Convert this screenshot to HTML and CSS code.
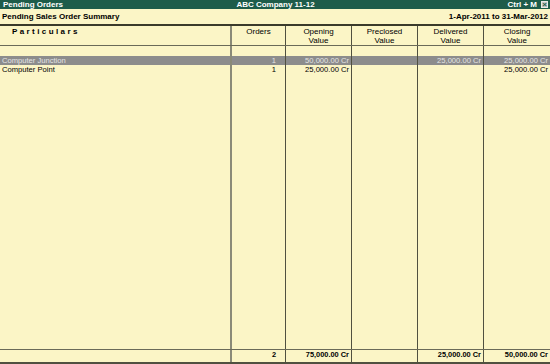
FILE: index.html
```html
<!DOCTYPE html>
<html>
<head>
<meta charset="utf-8">
<link rel="stylesheet" href="styles.css">
</head>
<body>
<div class="screen">
  <div class="titlebar">
    <span class="t-left">Pending Orders</span>
    <span class="t-center">ABC Company 11-12</span>
    <span class="t-right">Ctrl + M <span class="closebox">&#215;</span></span>
  </div>
  <div class="subhead">
    <span>Pending Sales Order Summary</span>
    <span>1-Apr-2011 to 31-Mar-2012</span>
  </div>
  <div class="grid head">
    <div class="c c1 part">Particulars</div>
    <div class="c c2 ctr">Orders</div>
    <div class="c c3 ctr">Opening<br>Value</div>
    <div class="c c4 ctr">Preclosed<br>Value</div>
    <div class="c c5 ctr">Delivered<br>Value</div>
    <div class="c c6 ctr">Closing<br>Value</div>
  </div>
  <div class="grid body">
    <div class="c c1"></div><div class="c c2"></div><div class="c c3"></div><div class="c c4"></div><div class="c c5"></div><div class="c c6"></div>

    <div class="c c1 sel name">Computer Junction</div>
    <div class="c c2 sel num ord">1</div>
    <div class="c c3 sel num">50,000.00 Cr</div>
    <div class="c c4 sel num"></div>
    <div class="c c5 sel num">25,000.00 Cr</div>
    <div class="c c6 sel num">25,000.00 Cr</div>

    <div class="c c1 name">Computer Point</div>
    <div class="c c2 num ord">1</div>
    <div class="c c3 num">25,000.00 Cr</div>
    <div class="c c4 num"></div>
    <div class="c c5 num"></div>
    <div class="c c6 num">25,000.00 Cr</div>

    <div class="c c1"></div><div class="c c2"></div><div class="c c3"></div><div class="c c4"></div><div class="c c5"></div><div class="c c6"></div>
  </div>
  <div class="grid total">
    <div class="c c1"></div>
    <div class="c c2 num ord">2</div>
    <div class="c c3 num">75,000.00 Cr</div>
    <div class="c c4 num"></div>
    <div class="c c5 num">25,000.00 Cr</div>
    <div class="c c6 num">50,000.00 Cr</div>
  </div>
</div>
</body>
</html>
```
FILE: styles.css
```css
html, body {
  margin: 0;
  padding: 0;
  background: #fbf5c6;
}
.screen {
  width: 550px;
  height: 364px;
  display: flex;
  flex-direction: column;
  font-family: "Liberation Sans", Arial, sans-serif;
  font-size: 8px;
  color: #000;
  background: #fbf5c6;
  overflow: hidden;
}
.titlebar {
  height: 9px;
  background: #1e5c4a;
  color: #fff;
  font-weight: bold;
  font-size: 8px;
  line-height: 9px;
  display: grid;
  grid-template-columns: 1fr auto 1fr;
  padding: 0 2px 0 3px;
  flex: none;
}
.t-center { text-align: center; }
.t-right {
  text-align: right;
  display: flex;
  justify-content: flex-end;
  align-items: center;
  gap: 4px;
}
.closebox {
  display: inline-block;
  width: 7px;
  height: 7px;
  line-height: 6px;
  font-size: 8px;
  text-align: center;
  background: #c8c8c8;
  color: #1e5c4a;
  border: 1px solid #e8e8e8;
  box-sizing: border-box;
}
.subhead {
  height: 15px;
  display: flex;
  justify-content: space-between;
  align-items: center;
  font-weight: bold;
  font-size: 8px;
  padding: 0 2px 0 2px;
  border-bottom: 2px solid #3a3a2a;
  flex: none;
}
.grid {
  display: grid;
  grid-template-columns: 232px 54px 66px 66px 66px 66px;
}
.c { border-right: 1px solid #505040; box-sizing: border-box; }
.c1 { border-right: 2px solid #8a8a78; }
.c6 { border-right: none; }
.head {
  height: 19px;
  border-bottom: 1px solid #6a6a58;
  flex: none;
}
.head .c { padding-top: 2px; line-height: 8.5px; }
.part {
  font-weight: bold;
  letter-spacing: 2.4px;
  padding-left: 12px;
}
.ctr { text-align: center; }
.body {
  flex: 1;
  grid-template-rows: 10px 9px 9px 1fr;
  font-size: 7.6px;
}
.name { padding-left: 2px; line-height: 9px; }
.num { text-align: right; padding-right: 2px; line-height: 9px; }
.ord { padding-right: 9px; }
.sel {
  background: #8c8c8c;
  color: #e4e4e4;
}
.total {
  height: 12px;
  border-top: 1px solid #6a6a58;
  border-bottom: 2px solid #505040;
  font-weight: bold;
  font-size: 7.4px;
  flex: none;
}
.total .c { line-height: 9px; }
```
